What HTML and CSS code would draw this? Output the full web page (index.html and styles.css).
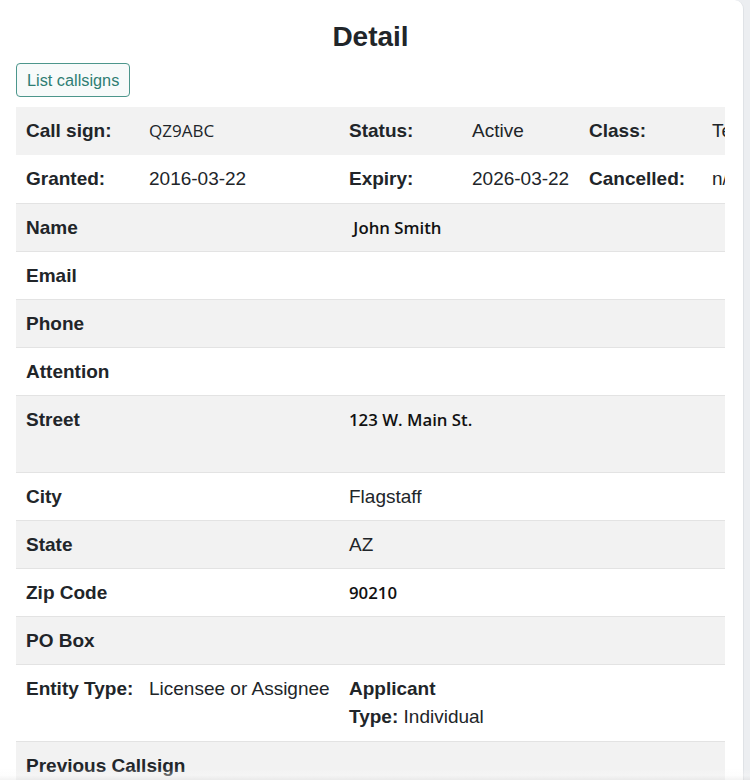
FILE: index.html
```html
<!DOCTYPE html>
<html>
<head>
	<meta http-equiv="Content-Type" content="text/html; charset=utf-8" />
	<title>Detail</title>
	<link rel="stylesheet" href="styles.css">
</head>
<body>
<div class="card">
	<h1>Detail</h1>
	<a class="list_button" href="#">List callsigns</a>
	<div class="table_wrap">
	<table class="detail">
		<colgroup>
			<col class="c1"><col class="c2"><col class="c3"><col class="c4"><col class="c5"><col class="c6">
		</colgroup>
		<tr class="plain">
			<th>Call sign:</th><td class="alt">QZ9ABC</td>
			<th>Status:</th><td>Active</td>
			<th>Class:</th><td>Technician</td>
		</tr>
		<tr class="plain">
			<th>Granted:</th><td>2016-03-22</td>
			<th>Expiry:</th><td>2026-03-22</td>
			<th>Cancelled:</th><td>n/a</td>
		</tr>
		<tr><th colspan="2">Name</th><td colspan="4" class="strong">&nbsp;John Smith</td></tr>
		<tr><th colspan="2">Email</th><td colspan="4"></td></tr>
		<tr><th colspan="2">Phone</th><td colspan="4"></td></tr>
		<tr><th colspan="2">Attention</th><td colspan="4"></td></tr>
		<tr class="tall"><th colspan="2">Street</th><td colspan="4" class="strong">123 W. Main St.<br>&nbsp;</td></tr>
		<tr><th colspan="2">City</th><td colspan="4">Flagstaff</td></tr>
		<tr><th colspan="2">State</th><td colspan="4">AZ</td></tr>
		<tr><th colspan="2">Zip Code</th><td colspan="4" class="strong">90210</td></tr>
		<tr><th colspan="2">PO Box</th><td colspan="4"></td></tr>
		<tr class="tall entity">
			<th>Entity Type:</th><td>Licensee or Assignee</td>
			<td colspan="4"><b>Applicant<br>Type:</b> Individual</td>
		</tr>
		<tr><th colspan="2">Previous Callsign</th><td colspan="4"></td></tr>
	</table>
	</div>
</div>
<div class="bottom_fade"></div>
</body>
</html>
```

FILE: styles.css
```css
html, body{
	margin: 0;
	height: 100%;
	overflow: hidden;
}
body{
	background-color: #eceef1;
	font-family: "Liberation Sans", Arial, sans-serif;
	color: #212529;
}

.card{
	display: flow-root;
	width: 709px;
	min-height: 780px;
	background-color: #fff;
	padding: 0 18px 0 16px;
	border-right: 1px solid #dfe2e6;
	border-top-right-radius: 9px;
}

h1{
	margin: 20px 0 0 0;
	font-size: 28px;
	line-height: 34px;
	text-align: center;
}

.list_button{
	display: inline-block;
	margin-top: 9px;
	padding: 4px 10px;
	font-size: 16.3px;
	line-height: 24px;
	color: #2e7d73;
	text-decoration: none;
	background-color: #f7fafa;
	border: 1px solid #4c968c;
	border-radius: 4px;
}

.table_wrap{
	margin-top: 10px;
	width: 709px;
	overflow: hidden;
}

.detail{
	width: 809px;
	table-layout: fixed;
	border-collapse: collapse;
	font-size: 19px;
}
.detail .c1{ width: 123px; }
.detail .c2{ width: 200px; }
.detail .c3{ width: 123px; }
.detail .c4{ width: 117px; }
.detail .c5{ width: 123px; }
.detail .c6{ width: 123px; }

.detail tr{
	border-top: 1px solid #e3e3e3;
}
.detail tr.plain{
	border-top: 0px;
}
.detail tr:nth-child(odd){
	background-color: #f2f2f2;
}

.detail th, .detail td{
	padding: 10px 10px;
	line-height: 27px;
	text-align: left;
	vertical-align: top;
	white-space: nowrap;
	overflow: hidden;
}
.detail tr.plain th, .detail tr.plain td{
	padding: 10px 10px 11px 10px;
}
.detail th{
	font-weight: bold;
}
.detail tr.tall td, .detail tr.tall th{
	height: 56px;
	line-height: 28px;
}
.detail tr.entity td, .detail tr.entity th{
	height: 54px;
}

.detail td.alt{
	font-family: "Open Sans", sans-serif;
	font-size: 17px;
	font-weight: 400;
}
.detail td.strong{
	font-family: "Open Sans", sans-serif;
	font-size: 16.8px;
	font-weight: 600;
	color: #111;
}

.bottom_fade{
	position: fixed;
	left: 0;
	right: 0;
	bottom: 0;
	height: 12px;
	background: linear-gradient(rgba(255,255,255,0), rgba(250,250,250,0.35) 60%, rgba(215,215,215,0.3));
	pointer-events: none;
}
```
